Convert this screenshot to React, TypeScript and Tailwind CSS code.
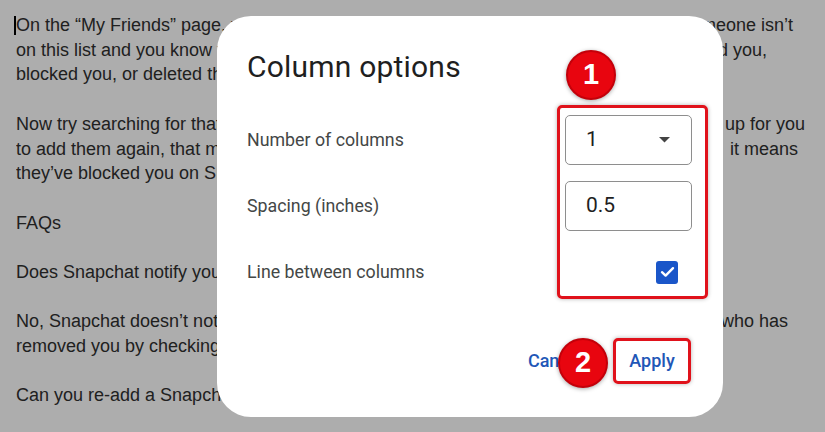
import React from "react";

type Line = { head: string; tail?: string; w?: string };

// lines whose right end shows past the dialog are split into head/tail so the tail
// lands where it does in the screenshot
const paragraphs: Line[][] = [
  [
    { head: "On the “My Friends” page, you’ll see all of your friends on Snapchat. If ", tail: "someone isn’t", w: "w-[777px]" },
    { head: "on this list and you know they were on it before, then they’ve either ", tail: "removed you,", w: "w-[751px]" },
    { head: "blocked you, or deleted their account." },
  ],
  [
    { head: "Now try searching for that person’s username. If their profile shows ", tail: "up for you", w: "w-[789px]" },
    { head: "to add them again, that means they’ve removed you. If it doesn’t show up, ", tail: "it means", w: "w-[782px]" },
    { head: "they’ve blocked you on Snapchat." },
  ],
  [{ head: "FAQs" }],
  [{ head: "Does Snapchat notify you when someone removes you?" }],
  [
    { head: "No, Snapchat doesn’t notify you about it, but you can find out about someone ", tail: "who has", w: "w-[772px]" },
    { head: "removed you by checking your friends list." },
  ],
  [{ head: "Can you re-add a Snapchat friend who removed you?" }],
];

function Badge({ n }: { n: string }) {
  return (
    <div className="w-[50px] h-[50px] rounded-full bg-[#e8050f] border-2 border-[#c4000a] shadow-[0_1px_4px_rgba(0,0,0,0.35)] flex items-center justify-center text-white text-[29px] font-bold font-['Liberation_Sans',Arial,sans-serif]">
      {n}
    </div>
  );
}

export default function App() {
  return (
    <div className="relative w-[825px] h-[432px] overflow-hidden bg-[#adadad]">
      {/* document text behind the dialog */}
      <div className="pt-[13px] pl-[16px] text-[18px] leading-[24.7px] text-[#202020] font-['Liberation_Sans',Arial,sans-serif]">
        {paragraphs.map((p, i) => (
          <div key={i} className="mb-[24.7px]">
            {p.map((line, j) => (
              <div key={j} className={`relative flex whitespace-nowrap ${line.w ?? ""}`}>
                {i === 0 && j === 0 ? (
                  <span className="absolute left-[-2px] top-[3px] w-[2px] h-[19px] bg-black" />
                ) : null}
                <span className="min-w-0 flex-1 overflow-hidden">{line.head}</span>
                {line.tail ? <span className="shrink-0">{line.tail}</span> : null}
              </div>
            ))}
          </div>
        ))}
      </div>

      {/* dialog */}
      <div className="absolute left-[217px] top-[16px] w-[506px] h-[401px] rounded-[34px] bg-white font-['Roboto',sans-serif]">
        <div className="pl-[30px] pr-[31px] pt-[31px] flex flex-col">
          <div className="text-[30px] leading-[40px] text-[#1f1f1f] tracking-[0.2px]">Column options</div>

          <div className="mt-[28px] flex flex-col gap-[16px]">
            <div className="flex items-center justify-between h-[50px]">
              <span className="text-[17.8px] text-[#444746]">Number of columns</span>
              <div className="w-[127px] h-[50px] border border-[#8e8e8e] rounded-[5px] flex items-center justify-between pl-[20px] pr-[21px]">
                <span className="text-[21px] text-[#1f1f1f]">1</span>
                <svg width="11" height="6" viewBox="0 0 11 6">
                  <path d="M0 0 L11 0 L5.5 5.5 Z" fill="#444" />
                </svg>
              </div>
            </div>
            <div className="flex items-center justify-between h-[50px]">
              <span className="text-[17.8px] text-[#444746]">Spacing (inches)</span>
              <div className="w-[127px] h-[50px] border border-[#8e8e8e] rounded-[5px] flex items-center pl-[20px]">
                <span className="text-[21px] text-[#1f1f1f]">0.5</span>
              </div>
            </div>
            <div className="flex items-center justify-between h-[50px]">
              <span className="text-[17.8px] text-[#444746]">Line between columns</span>
              <div className="w-[127px] flex justify-end pr-[14px]">
                <div className="w-[22px] h-[23px] rounded-[3px] bg-[#1a56c9] flex items-center justify-center">
                  <svg width="15" height="12" viewBox="0 0 15 12">
                    <path d="M2 6.2 L5.6 9.6 L13 2.2" fill="none" stroke="white" strokeWidth="2.4" strokeLinecap="round" strokeLinejoin="round" />
                  </svg>
                </div>
              </div>
            </div>
          </div>

          <div className="mt-[43px] flex justify-end items-center gap-[33px] pr-[4px]">
            <span className="text-[18px] font-medium text-[#1f57b7]">Cancel</span>
            <span className="w-[72px] h-[40px] flex items-center justify-center text-[18px] font-medium text-[#1f57b7]">Apply</span>
          </div>
        </div>

        {/* annotation boxes */}
        <div className="absolute left-[340px] top-[89px] w-[151px] h-[194px] border-[3px] border-[#e0121b] rounded-[5px] shadow-[0_0_4px_rgba(0,0,0,0.3)]" />
        <div className="absolute left-[396px] top-[322px] w-[78px] h-[46px] border-[3px] border-[#e0121b] rounded-[5px] shadow-[0_0_4px_rgba(0,0,0,0.3)]" />
        <div className="absolute left-[349px] top-[34px]">
          <Badge n="1" />
        </div>
        <div className="absolute left-[341px] top-[322px]">
          <Badge n="2" />
        </div>
      </div>
    </div>
  );
}
